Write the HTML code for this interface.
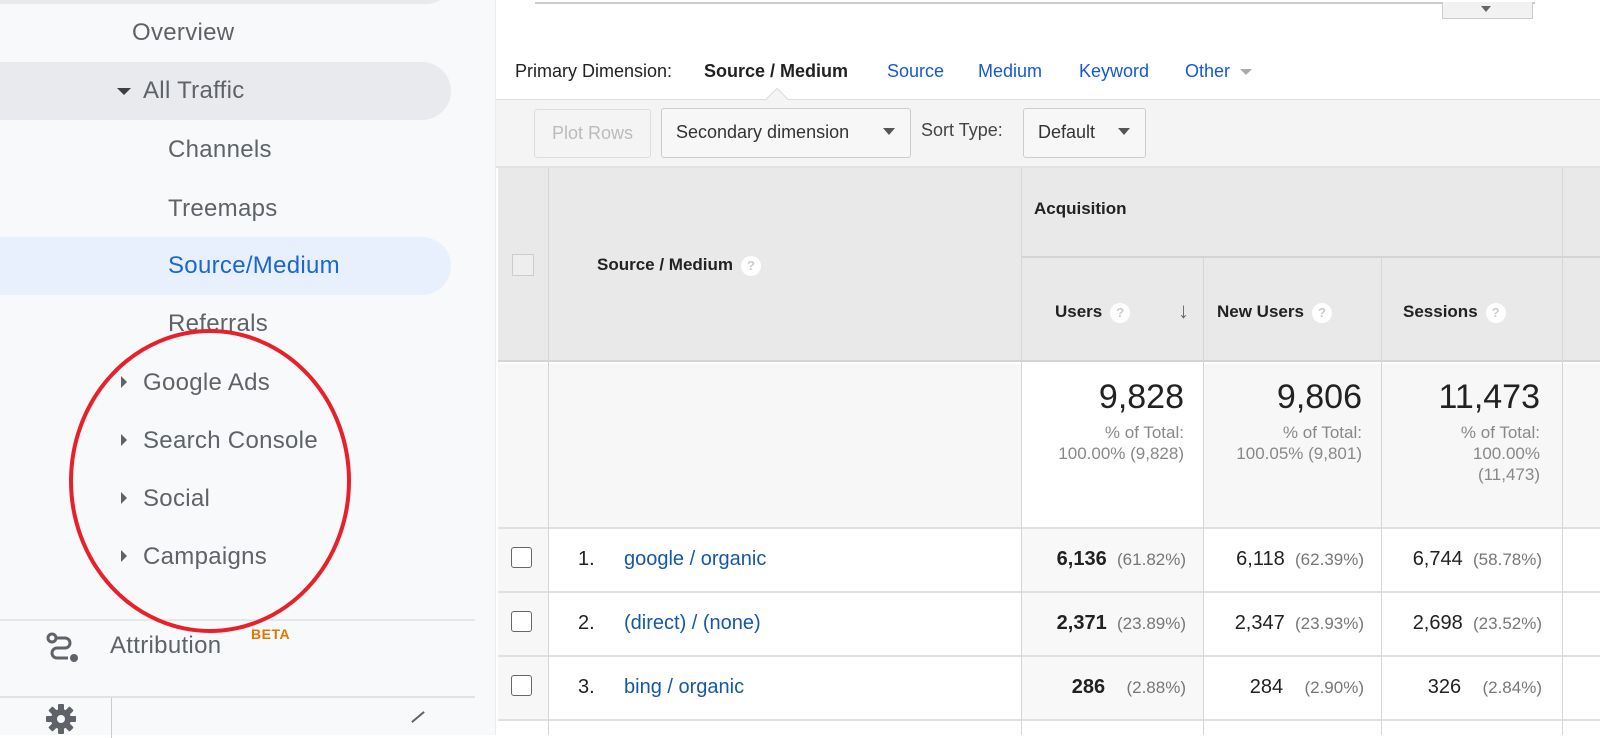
<!DOCTYPE html>
<html><head><meta charset="utf-8"><style>
*{margin:0;padding:0;box-sizing:border-box}
body{width:1600px;height:735px;overflow:hidden;position:relative;background:#fff;font-family:"Liberation Sans",Arial,sans-serif}
.a{position:absolute;white-space:nowrap}
#side{position:absolute;left:0;top:0;width:496px;height:735px;background:#f8f9fa;border-right:1px solid #ececec}
.nav{position:absolute;font-size:24px;color:#5f6368;letter-spacing:.3px}
.tri{position:absolute;width:0;height:0}
.n{font-size:20px;color:#222}
.link{color:#1558a7}
.g{color:#777}
.q{display:inline-block;width:20px;height:20px;border-radius:50%;background:#fff;color:#ccc;font-size:13px;text-align:center;line-height:20px;vertical-align:middle;margin-left:8px}
.cb{position:absolute;width:21px;height:21px;border:1.5px solid #666;border-radius:3px;background:#fff}
.vl{position:absolute;width:1px;background:#d6d6d6}
.hl{position:absolute;height:2px;background:#e0e0e0}
</style></head><body>
<div id="side">
  <div class="a" style="left:0;top:-20px;width:451px;height:24px;background:#e8eaed;border-radius:0 0 29px 0"></div>
  <div class="nav" style="left:132px;top:19px">Overview</div>
  <div class="a" style="left:0;top:62px;width:451px;height:58px;background:#e8eaed;border-radius:0 29px 29px 0"></div>
  <div class="tri" style="left:117px;top:88px;border-left:7px solid transparent;border-right:7px solid transparent;border-top:7px solid #3c4043"></div>
  <div class="nav" style="left:143px;top:77px;color:#5f6368">All Traffic</div>
  <div class="nav" style="left:168px;top:136px">Channels</div>
  <div class="nav" style="left:168px;top:195px">Treemaps</div>
  <div class="a" style="left:0;top:237px;width:451px;height:58px;background:#e8f0fe;border-radius:0 29px 29px 0"></div>
  <div class="nav" style="left:168px;top:252px;color:#1967d2">Source/Medium</div>
  <div class="nav" style="left:168px;top:310px">Referrals</div>
  <div class="tri" style="left:121px;top:376px;border-top:6px solid transparent;border-bottom:6px solid transparent;border-left:6px solid #5f6368"></div>
  <div class="nav" style="left:143px;top:369px">Google Ads</div>
  <div class="tri" style="left:121px;top:434px;border-top:6px solid transparent;border-bottom:6px solid transparent;border-left:6px solid #5f6368"></div>
  <div class="nav" style="left:143px;top:427px">Search Console</div>
  <div class="tri" style="left:121px;top:492px;border-top:6px solid transparent;border-bottom:6px solid transparent;border-left:6px solid #5f6368"></div>
  <div class="nav" style="left:143px;top:485px">Social</div>
  <div class="tri" style="left:121px;top:550px;border-top:6px solid transparent;border-bottom:6px solid transparent;border-left:6px solid #5f6368"></div>
  <div class="nav" style="left:143px;top:543px">Campaigns</div>
  <div class="a" style="left:0;top:619px;width:475px;height:2px;background:#e6e6e6"></div>
  <svg class="a" style="left:46px;top:632px" width="34" height="32" viewBox="0 0 34 32"><circle cx="6" cy="6" r="4" fill="none" stroke="#5f6368" stroke-width="3"/><path d="M10 6h9a5 5 0 0 1 0 10h-8a5 5 0 0 0 0 10h11" fill="none" stroke="#5f6368" stroke-width="3"/><circle cx="28" cy="26" r="4" fill="#5f6368"/></svg>
  <div class="nav" style="left:110px;top:632px">Attribution</div>
  <div class="a" style="left:251px;top:626px;font-size:14px;font-weight:bold;color:#e37400;letter-spacing:.5px">BETA</div>
  <div class="a" style="left:0;top:696px;width:475px;height:2px;background:#e2e2e2"></div>
  <div class="a" style="left:111px;top:698px;width:1px;height:40px;background:#ccc"></div>
  <svg class="a" style="left:45px;top:703px" width="32" height="32" viewBox="0 0 32 32"><g fill="#5f6368"><circle cx="16" cy="16" r="10"/><rect x="13" y="1" width="6" height="30" rx="1"/><rect x="1" y="13" width="30" height="6" rx="1"/><rect x="13" y="1" width="6" height="30" rx="1" transform="rotate(45 16 16)"/><rect x="13" y="1" width="6" height="30" rx="1" transform="rotate(-45 16 16)"/></g><circle cx="16" cy="16" r="4" fill="#f8f9fa"/></svg>
  <div class="a" style="left:410px;top:716px;width:16px;height:2px;background:#5f6368;transform:rotate(-40deg)"></div>
</div>
<svg class="a" style="left:0;top:0" width="500" height="735"><ellipse cx="210" cy="481" rx="139" ry="150" fill="none" stroke="#e8202a" stroke-width="4"/></svg>

<!-- top -->
<div class="a" style="left:535px;top:2px;width:1000px;height:2px;background:#ccc"></div>
<div class="a" style="left:1442px;top:2px;width:91px;height:17px;background:#f2f2f2;border:1px solid #ccc;border-top:none"></div>
<div class="tri" style="left:1481px;top:6px;border-left:5px solid transparent;border-right:5px solid transparent;border-top:6px solid #666"></div>
<div class="a" style="left:515px;top:61px;font-size:18px;color:#222">Primary Dimension:</div>
<div class="a" style="left:704px;top:61px;font-size:18px;color:#222;font-weight:bold">Source / Medium</div>
<div class="a" style="left:887px;top:61px;font-size:18px;color:#1558d6">Source</div>
<div class="a" style="left:978px;top:61px;font-size:18px;color:#1558d6">Medium</div>
<div class="a" style="left:1079px;top:61px;font-size:18px;color:#1558d6">Keyword</div>
<div class="a" style="left:1185px;top:61px;font-size:18px;color:#1558d6">Other</div>
<div class="tri" style="left:1240px;top:69px;border-left:6px solid transparent;border-right:6px solid transparent;border-top:6px solid #aaa"></div>
<!-- toolbar -->
<div class="a" style="left:496px;top:99px;width:1104px;height:69px;background:#f4f4f4;border-top:1px solid #ddd;border-bottom:2px solid #e2e2e2"></div>
<div class="a" style="left:769px;top:91px;width:16px;height:16px;background:#f4f4f4;border-left:1px solid #ddd;border-top:1px solid #ddd;transform:rotate(45deg)"></div>
<div class="a" style="left:534px;top:109px;width:117px;height:49px;border:1px solid #ddd;border-radius:3px;font-size:18px;color:#bbb;text-align:center;line-height:47px">Plot Rows</div>
<div class="a" style="left:661px;top:108px;width:250px;height:50px;border:1px solid #ccc;border-radius:3px;background:#f7f7f7;font-size:18px;color:#333;padding-left:14px;line-height:46px">Secondary dimension</div>
<div class="tri" style="left:883px;top:128px;border-left:6px solid transparent;border-right:6px solid transparent;border-top:7px solid #555"></div>
<div class="a" style="left:921px;top:120px;font-size:18px;color:#444">Sort Type:</div>
<div class="a" style="left:1023px;top:108px;width:123px;height:50px;border:1px solid #ccc;border-radius:3px;background:#f7f7f7;font-size:18px;color:#333;padding-left:14px;line-height:46px">Default</div>
<div class="tri" style="left:1118px;top:128px;border-left:6px solid transparent;border-right:6px solid transparent;border-top:7px solid #555"></div>

<!-- table header -->
<div class="a" style="left:498px;top:168px;width:1102px;height:194px;background:#e9e9e9;border-bottom:2px solid #d4d4d4"></div>
<div class="a" style="left:1021px;top:256px;width:579px;height:2px;background:#d4d4d4"></div>
<div class="a" style="left:512px;top:254px;width:22px;height:22px;border:1px solid #ccc;background:#eee"></div>
<div class="a" style="left:597px;top:255px;font-size:17px;font-weight:bold;color:#222">Source / Medium<span class="q">?</span></div>
<div class="a" style="left:1034px;top:199px;font-size:17px;font-weight:bold;color:#222">Acquisition</div>
<div class="a" style="left:1055px;top:302px;font-size:17px;font-weight:bold;color:#222">Users<span class="q">?</span></div>
<div class="a" style="left:1178px;top:298px;font-size:22px;color:#666">&#8595;</div>
<div class="a" style="left:1217px;top:302px;font-size:17px;font-weight:bold;color:#222">New Users<span class="q">?</span></div>
<div class="a" style="left:1403px;top:302px;font-size:17px;font-weight:bold;color:#222">Sessions<span class="q">?</span></div>
<!-- summary -->
<div class="a" style="left:498px;top:364px;width:1102px;height:164px;background:#f7f7f7"></div>
<div class="a" style="left:1022px;top:364px;width:181px;height:164px;background:#fff"></div>
<div class="a" style="left:1022px;top:528px;width:181px;height:192px;background:#f8f8f8"></div>
<div class="a n" style="right:416px;top:378px;font-size:34px;color:#222;text-align:right">9,828</div>
<div class="a" style="right:416px;top:422px;font-size:17px;color:#888;text-align:right;line-height:21px">% of Total:<br>100.00% (9,828)</div>
<div class="a n" style="right:238px;top:378px;font-size:34px;color:#222;text-align:right">9,806</div>
<div class="a" style="right:238px;top:422px;font-size:17px;color:#888;text-align:right;line-height:21px">% of Total:<br>100.05% (9,801)</div>
<div class="a n" style="right:60px;top:378px;font-size:34px;color:#222;text-align:right">11,473</div>
<div class="a" style="right:60px;top:422px;font-size:17px;color:#888;text-align:right;line-height:21px">% of Total:<br>100.00%<br>(11,473)</div>
<!-- rows -->
<div class="a" style="left:498px;top:528px;width:50px;height:192px;background:#f7f7f7"></div>
<div class="hl" style="left:498px;top:527px;width:1102px"></div>
<div class="hl" style="left:498px;top:591px;width:1102px"></div>
<div class="hl" style="left:498px;top:655px;width:1102px"></div>
<div class="hl" style="left:498px;top:719px;width:1102px"></div>
<div class="vl" style="left:548px;top:168px;height:567px"></div>
<div class="vl" style="left:1021px;top:168px;height:567px"></div>
<div class="vl" style="left:1203px;top:257px;height:478px"></div>
<div class="vl" style="left:1381px;top:257px;height:478px"></div>
<div class="vl" style="left:1562px;top:168px;height:567px"></div>
<div class="cb" style="left:511px;top:547px"></div>
<div class="cb" style="left:511px;top:611px"></div>
<div class="cb" style="left:511px;top:675px"></div>
<div class="a n" style="left:578px;top:548px">1.</div>
<div class="a n link" style="left:624px;top:548px">google / organic</div>
<div class="a n" style="left:578px;top:612px">2.</div>
<div class="a n link" style="left:624px;top:612px">(direct) / (none)</div>
<div class="a n" style="left:578px;top:676px">3.</div>
<div class="a n link" style="left:624px;top:676px">bing / organic</div>

<div class="a n" style="right:414px;top:548px"><b>6,136</b> <span class="g" style="font-size:17px">&nbsp;(61.82%)</span></div>
<div class="a n" style="right:236px;top:548px">6,118 <span class="g" style="font-size:17px">&nbsp;(62.39%)</span></div>
<div class="a n" style="right:58px;top:548px">6,744 <span class="g" style="font-size:17px">&nbsp;(58.78%)</span></div>
<div class="a n" style="right:414px;top:612px"><b>2,371</b> <span class="g" style="font-size:17px">&nbsp;(23.89%)</span></div>
<div class="a n" style="right:236px;top:612px">2,347 <span class="g" style="font-size:17px">&nbsp;(23.93%)</span></div>
<div class="a n" style="right:58px;top:612px">2,698 <span class="g" style="font-size:17px">&nbsp;(23.52%)</span></div>
<div class="a n" style="right:414px;top:676px"><b>286</b> &nbsp;&nbsp;<span class="g" style="font-size:17px">&nbsp;(2.88%)</span></div>
<div class="a n" style="right:236px;top:676px">284 &nbsp;&nbsp;<span class="g" style="font-size:17px">&nbsp;(2.90%)</span></div>
<div class="a n" style="right:58px;top:676px">326 &nbsp;&nbsp;<span class="g" style="font-size:17px">&nbsp;(2.84%)</span></div>
</body></html>
